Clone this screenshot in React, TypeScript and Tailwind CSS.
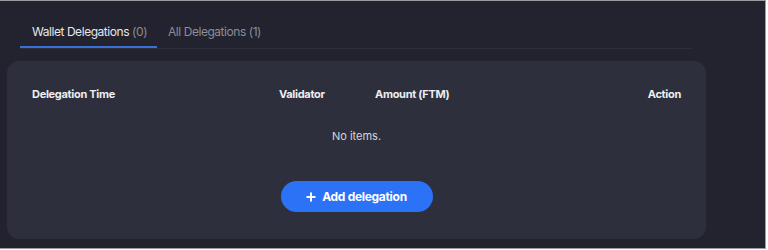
import React from "react";

export default function App() {
  return (
    <div className="w-[766px] h-[249px] bg-[#22232e] border-t border-r border-b border-[#9a9b9f] overflow-hidden" style={{ fontFamily: "Inter, 'Noto Sans', sans-serif" }}>
      <div className="ml-[20px] w-[672px] mt-[14px] flex border-b border-[#2c2e3a]">
        <div className="w-[137px] h-[33px] flex items-center pl-[12px] pt-[2px] border-b-2 border-[#3a6fd8] -mb-px text-[12px] tracking-[-0.45px]">
          <span className="text-[#e6e7ec]">Wallet Delegations</span>
          <span className="text-[#8b8d98] ml-[3px]">(0)</span>
        </div>
        <div className="h-[33px] flex items-center pl-[11px] pt-[1px] text-[12px] text-[#8b8d98] tracking-[-0.45px]">
          All Delegations (1)
        </div>
      </div>
      <div className="ml-[7px] mt-[12px] w-[699px] h-[178px] bg-[#2d2f3d] rounded-[12px] flex flex-col">
        <div className="flex items-center h-[20px] mt-[23px] text-[11px] font-bold text-[#eceef2] tracking-[-0.3px]">
          <div className="w-[272px] pl-[25px]">Delegation Time</div>
          <div className="w-[96px]">Validator</div>
          <div className="flex-1">Amount (FTM)</div>
          <div className="pr-[25px]">Action</div>
        </div>
        <div className="mt-[25px] text-center text-[11px] text-[#d4d6dd] leading-[14px]">No items.</div>
        <div className="mt-[38px] flex justify-center">
          <button className="w-[152px] h-[31px] rounded-full bg-[#2c72f6] text-white text-[12px] font-bold tracking-[-0.3px] flex items-center justify-center gap-[6px]">
            <svg width="10" height="10" viewBox="0 0 10 10">
              <path d="M5 0.5V9.5M0.5 5H9.5" stroke="white" strokeWidth="2" />
            </svg>
            Add delegation
          </button>
        </div>
      </div>
    </div>
  );
}
